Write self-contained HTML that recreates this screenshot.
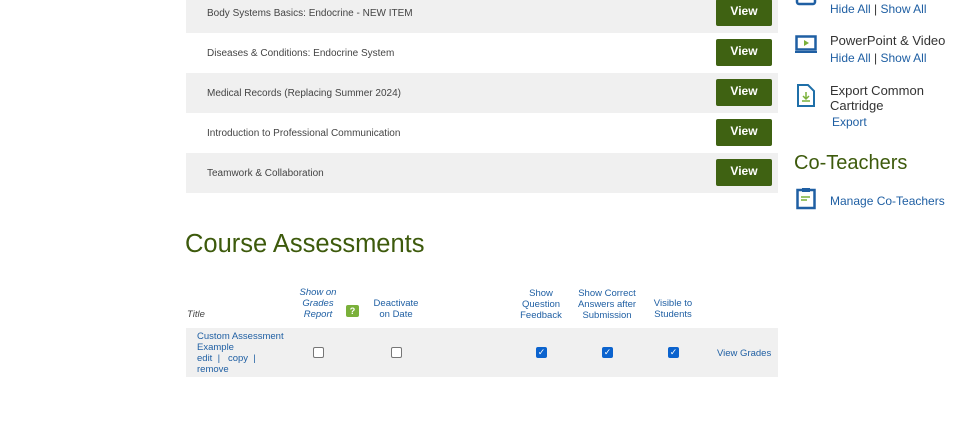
<!DOCTYPE html>
<html><head><style>
body{margin:0;width:977px;height:422px;background:#fff;font-family:"Liberation Sans",Arial,sans-serif;position:relative;overflow:hidden}
.a{position:absolute}
.row{position:absolute;left:186px;width:592px;height:40px}
.row span{position:absolute;left:21px;top:15px;font-size:10px;color:#444}
.btn{position:absolute;left:530px;top:6px;width:56px;height:27px;background:#3f6212;border-radius:2px;color:#fff;font-size:12px;font-weight:bold;text-align:center;line-height:25px}
.g{background:#f0f0f0}
.lk{color:#1f5fa3;font-size:12px}
.h{font-size:9.5px;color:#1f5fa3;text-align:center;line-height:11px}
.cb{position:absolute;width:9px;height:9px;border:1px solid #767676;border-radius:2px;background:#fff}
.ck{position:absolute;width:11px;height:11px;border-radius:2px;background:#0b63ce;color:#fff;font-size:9px;line-height:11px;text-align:center}
</style></head><body>
<div class="row g" style="top:-7px"><span>Body Systems Basics: Endocrine - NEW ITEM</span><div class="btn">View</div></div>
<div class="row" style="top:33px"><span>Diseases &amp; Conditions: Endocrine System</span><div class="btn">View</div></div>
<div class="row g" style="top:73px"><span>Medical Records (Replacing Summer 2024)</span><div class="btn">View</div></div>
<div class="row" style="top:113px"><span>Introduction to Professional Communication</span><div class="btn">View</div></div>
<div class="row g" style="top:153px"><span>Teamwork &amp; Collaboration</span><div class="btn">View</div></div>

<div class="a" style="left:185px;top:230px;font-size:25.5px;color:#3d5a0c">Course Assessments</div>

<div class="a" style="left:187px;top:309px;font-size:9.5px;color:#444;font-style:italic">Title</div>
<div class="a h" style="left:293px;top:287px;width:50px;font-style:italic">Show on Grades Report</div>
<div class="a" style="left:346px;top:305px;width:13px;height:12px;background:#7ab03a;border-radius:2px;color:#fff;font-size:9px;font-weight:bold;text-align:center;line-height:12px">?</div>
<div class="a h" style="left:370px;top:298px;width:52px">Deactivate on Date</div>
<div class="a h" style="left:511px;top:288px;width:60px">Show Question Feedback</div>
<div class="a h" style="left:572px;top:288px;width:70px">Show Correct Answers after Submission</div>
<div class="a h" style="left:645px;top:298px;width:56px">Visible to Students</div>

<div class="a g" style="left:186px;top:328px;width:592px;height:49px"></div>
<div class="a" style="left:197px;top:331px;font-size:9.5px;color:#1f5fa3;line-height:11px">Custom Assessment<br>Example<br>edit &nbsp;| &nbsp;&nbsp;copy &nbsp;|<br>remove</div>
<div class="cb" style="left:313px;top:347px"></div>
<div class="cb" style="left:391px;top:347px"></div>
<div class="ck" style="left:536px;top:347px">✓</div>
<div class="ck" style="left:602px;top:347px">✓</div>
<div class="ck" style="left:668px;top:347px">✓</div>
<div class="a" style="left:717px;top:348px;font-size:9.5px;color:#1f5fa3">View Grades</div>

<svg class="a" style="left:795px;top:-6px" width="22" height="14"><rect x="2" y="0" width="18" height="10" rx="2" fill="none" stroke="#1f5fa3" stroke-width="2.5"/></svg>
<div class="a lk" style="left:830px;top:2px">Hide All <span style="color:#333">|</span> Show All</div>

<svg class="a" style="left:795px;top:35px" width="22" height="20"><rect x="1.5" y="1.5" width="19" height="13" fill="none" stroke="#1f5fa3" stroke-width="2.5"/><rect x="0" y="16" width="22" height="2" fill="#1f5fa3"/><path d="M9 5l5 3-5 3z" fill="#7ab03a"/></svg>
<div class="a" style="left:830px;top:33px;font-size:13px;color:#333">PowerPoint &amp; Video</div>
<div class="a lk" style="left:830px;top:51px">Hide All <span style="color:#333">|</span> Show All</div>

<svg class="a" style="left:796px;top:83px" width="20" height="25"><path d="M2 2h10l6 6v15H2z" fill="none" stroke="#1f6fa8" stroke-width="2"/><path d="M10 9v7M7 13l3 3 3-3M6 18h8" stroke="#7ab03a" stroke-width="1.5" fill="none"/></svg>
<div class="a" style="left:830px;top:83px;font-size:13px;color:#333;line-height:15px">Export Common<br>Cartridge</div>
<div class="a lk" style="left:832px;top:115px">Export</div>

<div class="a" style="left:794px;top:152px;font-size:20px;color:#3d5a0c">Co-Teachers</div>
<svg class="a" style="left:796px;top:187px" width="22" height="23"><rect x="1.5" y="3" width="17" height="18" fill="none" stroke="#1f5fa3" stroke-width="2.5"/><rect x="6" y="1" width="8" height="4" fill="#1f5fa3"/><path d="M5 10h9M5 13h6" stroke="#7ab03a" stroke-width="1.5"/></svg>
<div class="a lk" style="left:830px;top:194px">Manage Co-Teachers</div>
</body></html>
